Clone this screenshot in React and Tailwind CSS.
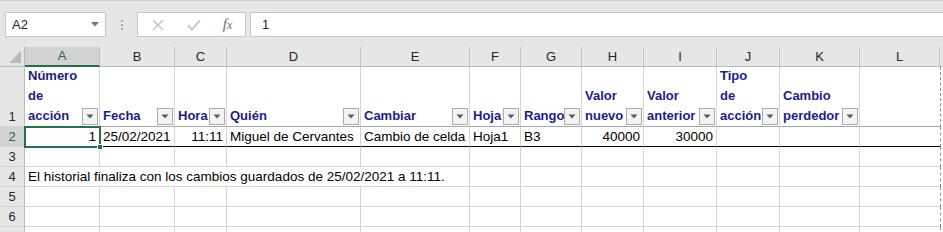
import React from "react";

const font = { fontFamily: '"Liberation Sans", Arial, sans-serif' };

const cols = ["A", "B", "C", "D", "E", "F", "G", "H", "I", "J", "K", "L"];

const headers = [
  ["Número", "de", "acción"],
  ["Fecha"],
  ["Hora"],
  ["Quién"],
  ["Cambiar"],
  ["Hoja"],
  ["Rango"],
  ["Valor", "nuevo"],
  ["Valor", "anterior"],
  ["Tipo", "de", "acción"],
  ["Cambio", "perdedor"],
  null,
];

const row2 = [
  { v: "1", r: true },
  { v: "25/02/2021" },
  { v: "11:11", r: true },
  { v: "Miguel de Cervantes" },
  { v: "Cambio de celda" },
  { v: "Hoja1" },
  { v: "B3" },
  { v: "40000", r: true },
  { v: "30000", r: true },
  { v: "" },
  { v: "" },
  { v: "" },
];

function FilterButton() {
  return (
    <div className="w-[16px] h-[17px] mb-[1px] mr-[1px] shrink-0 bg-[#f3f3f3] border border-[#acacac] flex items-center justify-center">
      <svg width="8" height="5" viewBox="0 0 8 5">
        <path d="M0.5 0.5 L7.5 0.5 L4 4.5 Z" fill="#5a5a5a" />
      </svg>
    </div>
  );
}

function RowHeader({ n, selected, end }) {
  return (
    <div
      className={`flex justify-center border-r border-b border-r-[#bdbdbd] border-b-[#d4d4d4] text-[13px] leading-[19px] ${
        end ? "items-end" : "items-center"
      } ${selected ? "bg-[#d2d2d2] text-[#1e6b41]" : "bg-[#e6e6e6] text-[#262626]"}`}
    >
      {n}
    </div>
  );
}

function Cell({ children, className = "" }) {
  return (
    <div className={`border-b border-r border-[#d4d4d4] text-[13.5px] leading-[19px] text-black whitespace-nowrap overflow-hidden ${className}`}>
      {children}
    </div>
  );
}

function EndCell() {
  return <div className="border-l border-dashed border-[#8e8e8e]" />;
}

export default function App() {
  return (
    <div className="w-[943px] h-[232px] overflow-hidden bg-white" style={font}>
      {/* Formula bar */}
      <div className="h-[47px] bg-[#e6e6e6] border-t border-[#d0d0d0] flex pt-[11px] pl-[5px]">
        <div className="w-[101px] h-[25px] bg-white border border-[#c6c6c6] flex items-center justify-between pl-[6px] pr-[6px]">
          <span className="text-[13px] text-[#222]">A2</span>
          <svg width="8" height="5" viewBox="0 0 8 5">
            <path d="M0 0 L8 0 L4 4.5 Z" fill="#777" />
          </svg>
        </div>
        <div className="w-[31px] h-[25px] flex flex-col items-center justify-center gap-[2px]">
          <span className="w-[2px] h-[2px] bg-[#a8a8a8]" />
          <span className="w-[2px] h-[2px] bg-[#a8a8a8]" />
          <span className="w-[2px] h-[2px] bg-[#a8a8a8]" />
        </div>
        <div className="w-[109px] h-[25px] bg-white border border-[#c6c6c6] flex items-center">
          <div className="w-[40px] flex justify-center">
            <svg width="12" height="12" viewBox="0 0 12 12">
              <path d="M1 1 L11 11 M11 1 L1 11" stroke="#c2c2c2" strokeWidth="1.4" />
            </svg>
          </div>
          <div className="w-[32px] flex justify-center">
            <svg width="14" height="12" viewBox="0 0 14 12">
              <path d="M1 6.5 L5 10.5 L13 1.5" stroke="#c2c2c2" strokeWidth="1.8" fill="none" />
            </svg>
          </div>
          <div className="flex-1 flex justify-center">
            <span
              className="italic text-[15px] text-[#6e6e6e] leading-none"
              style={{ fontFamily: '"Liberation Serif", "Times New Roman", serif' }}
            >
              f<span className="text-[12px]">x</span>
            </span>
          </div>
        </div>
        <div className="ml-[4px] flex-1 h-[25px] bg-white border border-[#c6c6c6] border-r-0 flex items-center pl-[11px]">
          <span className="text-[13px] text-[#222]">1</span>
        </div>
      </div>

      {/* Sheet grid */}
      <div className="grid grid-cols-[25px_75px_75px_52px_134px_109px_51px_61px_62px_73px_63px_80px_80px_1fr] grid-rows-[20px_60px_20px_20px_20px_20px_20px_20px]">
        {/* Column headers */}
        <div className="bg-[#e6e6e6] border-r border-b border-r-[#bdbdbd] border-b-[#bababa] flex items-end justify-end pr-[3px] pb-[3px]">
          <svg width="12" height="12" viewBox="0 0 12 12">
            <path d="M12 0 L12 12 L0 12 Z" fill="#b9b9b9" />
          </svg>
        </div>
        {cols.map((c, i) => (
          <div
            key={c}
            className={`flex items-center justify-center text-[13px] border-r border-r-[#c3c3c3] ${
              i === 0
                ? "bg-[#d2d2d2] text-[#1e6b41] border-b-2 border-b-[#217346]"
                : "bg-[#e6e6e6] text-[#262626] border-b border-b-[#bababa]"
            }`}
          >
            {c}
          </div>
        ))}
        <div className="bg-[#e6e6e6] border-b border-b-[#bababa]" />

        {/* Row 1 - table headers */}
        <RowHeader n="1" end />
        {headers.map((h, i) => (
          <div
            key={i}
            className={`flex items-end border-b border-b-[#a6a6a6] ${i === 11 ? "" : "border-r border-r-[#d4d4d4]"}`}
          >
            {h && (
              <>
                <div className="flex-1 pl-[3px] text-[13px] leading-[20px] font-bold text-[#1c1c8c] whitespace-nowrap">
                  {h.map((line, j) => (
                    <div key={j}>{line}</div>
                  ))}
                </div>
                <FilterButton />
              </>
            )}
          </div>
        ))}
        <EndCell />

        {/* Row 2 - data */}
        <RowHeader n="2" selected />
        {row2.map((c, i) => (
          <div
            key={i}
            className={`relative text-[13.5px] leading-[19px] text-black whitespace-nowrap border-b border-b-black ${
              i === 11 ? "" : "border-r border-r-[#d4d4d4]"
            } ${c.r ? "text-right pr-[3px]" : "pl-[3px]"}`}
          >
            {c.v}
            {i === 0 && (
              <div className="absolute -left-[1px] -top-[1px] w-[77px] h-[22px] border-2 border-[#217346] z-10">
                <div className="absolute -right-[4px] -bottom-[4px] w-[6px] h-[6px] bg-[#217346] border border-white" />
              </div>
            )}
          </div>
        ))}
        <EndCell />

        {/* Rows 3-7 */}
        {[3, 4, 5, 6, 7].map((n) => (
          <React.Fragment key={n}>
            <RowHeader n={n === 7 ? "" : String(n)} />
            {n === 4 ? (
              <>
                <Cell className="col-span-5 pl-[3px]">
                  El historial finaliza con los cambios guardados de 25/02/2021 a 11:11.
                </Cell>
                {cols.slice(5).map((c, i) => (
                  <Cell key={c} className={i === 6 ? "border-r-0" : ""} />
                ))}
              </>
            ) : (
              cols.map((c, i) => <Cell key={c} className={i === 11 ? "border-r-0" : ""} />)
            )}
            <EndCell />
          </React.Fragment>
        ))}
      </div>
    </div>
  );
}
